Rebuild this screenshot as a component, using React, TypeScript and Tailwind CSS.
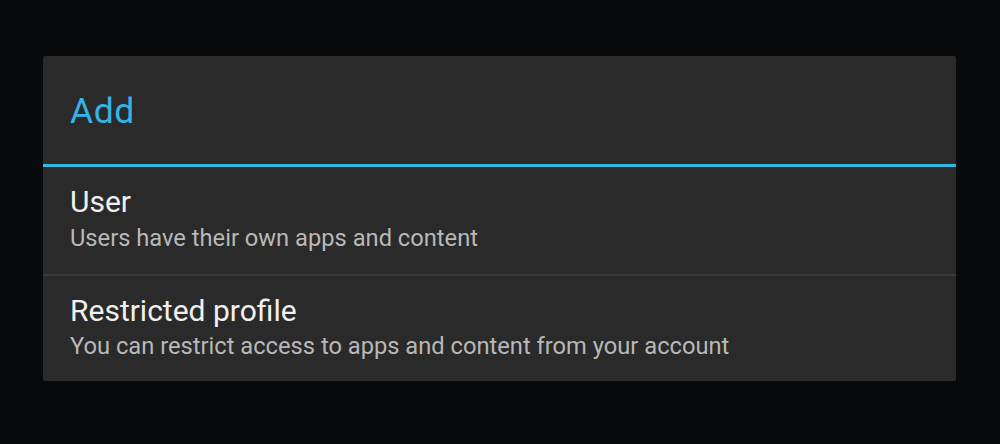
export default function App() {
  return (
    <div
      className="w-[1000px] h-[444px] bg-[#08090a] pt-[56px] pl-[43px]"
      style={{ fontFamily: 'Roboto, "Noto Sans", sans-serif' }}
    >
      <div className="w-[913px] h-[325px] bg-[#2a2a2a] rounded-[2px] flex flex-col overflow-hidden">
        <div className="h-[108px] pt-[35px] pl-[27px]">
          <div className="text-[35.5px] leading-[40px] tracking-[0.5px] text-[#33b5e5]">Add</div>
        </div>
        <div className="h-[3px] bg-[#33b5e5]" />
        <div className="h-[107px] pt-[17px] pl-[27px]">
          <div className="text-[30px] leading-[36px] text-[#f0f0f0]">User</div>
          <div className="mt-[3px] text-[23.7px] leading-[30px] text-[#b8b8b8]">Users have their own apps and content</div>
        </div>
        <div className="h-[2px] bg-[#3a3a3a]" />
        <div className="flex-1 pt-[17px] pl-[27px]">
          <div className="text-[30px] leading-[36px] text-[#f0f0f0]">Restricted profile</div>
          <div className="mt-[2px] text-[23.7px] leading-[30px] text-[#b8b8b8]">You can restrict access to apps and content from your account</div>
        </div>
      </div>
    </div>
  );
}
